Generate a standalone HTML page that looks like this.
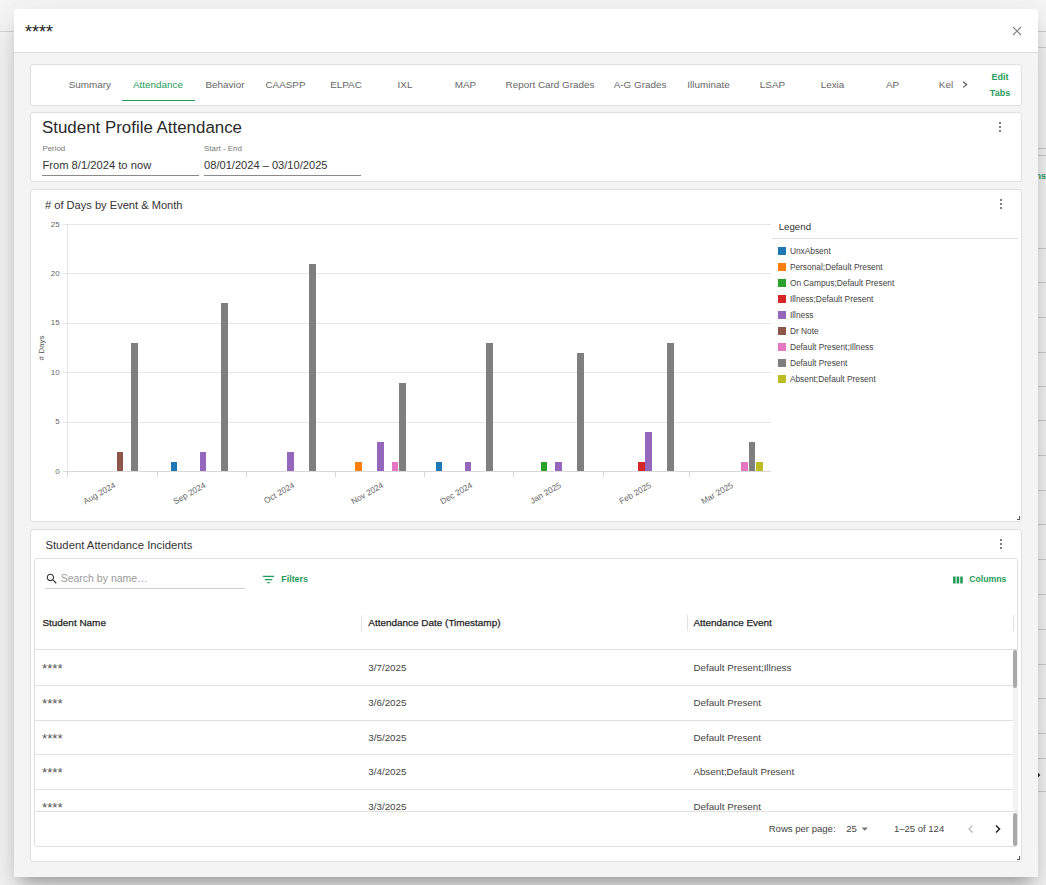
<!DOCTYPE html>
<html><head><meta charset="utf-8"><title>Student Profile</title>
<style>
html,body{margin:0;padding:0;}
body{width:1046px;height:885px;overflow:hidden;position:relative;font-family:"Liberation Sans",sans-serif;}
.t{position:absolute;line-height:1;white-space:nowrap;}
</style></head><body>
<div style="position:absolute;left:0.00px;top:0.00px;width:1046.00px;height:885.00px;background:#f6f6f6"></div>
<div style="position:absolute;left:0.00px;top:31.00px;width:14.00px;height:1.00px;background:#d6d6d6"></div>
<div style="position:absolute;left:1038.00px;top:31.00px;width:8.00px;height:1.00px;background:#d0d0d0"></div>
<div style="position:absolute;left:1038.00px;top:47.00px;width:8.00px;height:1.00px;background:#d0d0d0"></div>
<div style="position:absolute;left:1038.00px;top:148.00px;width:8.00px;height:1.00px;background:#cfcfcf"></div>
<div style="position:absolute;left:1038.00px;top:155.00px;width:8.00px;height:1.00px;background:#cfcfcf"></div>
<div style="position:absolute;left:1038.00px;top:248.00px;width:8.00px;height:1.00px;background:#cfcfcf"></div>
<div style="position:absolute;left:1038.00px;top:282.00px;width:8.00px;height:1.00px;background:#cfcfcf"></div>
<div style="position:absolute;left:1038.00px;top:317.00px;width:8.00px;height:1.00px;background:#cfcfcf"></div>
<div style="position:absolute;left:1038.00px;top:352.00px;width:8.00px;height:1.00px;background:#cfcfcf"></div>
<div style="position:absolute;left:1038.00px;top:386.00px;width:8.00px;height:1.00px;background:#cfcfcf"></div>
<div style="position:absolute;left:1038.00px;top:420.00px;width:8.00px;height:1.00px;background:#cfcfcf"></div>
<div style="position:absolute;left:1038.00px;top:455.00px;width:8.00px;height:1.00px;background:#cfcfcf"></div>
<div style="position:absolute;left:1038.00px;top:490.00px;width:8.00px;height:1.00px;background:#cfcfcf"></div>
<div style="position:absolute;left:1038.00px;top:524.00px;width:8.00px;height:1.00px;background:#cfcfcf"></div>
<div style="position:absolute;left:1038.00px;top:559.00px;width:8.00px;height:1.00px;background:#cfcfcf"></div>
<div style="position:absolute;left:1038.00px;top:594.00px;width:8.00px;height:1.00px;background:#cfcfcf"></div>
<div style="position:absolute;left:1038.00px;top:629.00px;width:8.00px;height:1.00px;background:#cfcfcf"></div>
<div style="position:absolute;left:1038.00px;top:664.00px;width:8.00px;height:1.00px;background:#cfcfcf"></div>
<div style="position:absolute;left:1038.00px;top:698.00px;width:8.00px;height:1.00px;background:#cfcfcf"></div>
<div style="position:absolute;left:1038.00px;top:733.00px;width:8.00px;height:1.00px;background:#cfcfcf"></div>
<div style="position:absolute;left:1038.00px;top:758.00px;width:8.00px;height:1.00px;background:#cfcfcf"></div>
<div style="position:absolute;left:1038.00px;top:791.00px;width:8.00px;height:1.00px;background:#cfcfcf"></div>
<div class="t" style="left:1035.50px;top:172.38px;font-size:9px;color:#259b5a;font-weight:700;">ns</div>
<svg style="position:absolute;left:1037px;top:771.5px" width="4" height="6" viewBox="0 0 4 6"><path d="M1 0.8L3.4 3L1 5.2z" fill="#222"/></svg>
<div id="modal" style="position:absolute;left:14px;top:9px;width:1024px;height:868px;background:#f4f4f4;border-radius:4px 4px 0 0;box-shadow:0 11px 15px -7px rgba(0,0,0,.3),0 24px 38px 3px rgba(0,0,0,.09),0 9px 46px 8px rgba(0,0,0,.05);"></div>
<div style="position:absolute;left:14.00px;top:9.00px;width:1024.00px;height:43.00px;background:#fff;border-radius:4px 4px 0 0;border-bottom:1px solid #dcdcdc"></div>
<div class="t" style="left:25.00px;top:23.26px;font-size:18px;color:#222;">****</div>
<svg style="position:absolute;left:1011px;top:24.8px" width="12" height="12" viewBox="0 0 12 12"><path d="M2 2L10 10M10 2L2 10" stroke="#858585" stroke-width="1.2"/></svg>
<div style="position:absolute;left:30.00px;top:64.00px;width:992.00px;height:42.00px;background:#fff;border:1px solid #e0e0e0;border-radius:3px;box-sizing:border-box;"></div>
<div class="t" style="left:-110.20px;width:400px;text-align:center;top:79.82px;font-size:9.9px;color:#666;">Summary</div>
<div class="t" style="left:-42.10px;width:400px;text-align:center;top:79.82px;font-size:9.9px;color:#259b5a;">Attendance</div>
<div class="t" style="left:25.00px;width:400px;text-align:center;top:79.82px;font-size:9.9px;color:#666;">Behavior</div>
<div class="t" style="left:85.50px;width:400px;text-align:center;top:79.82px;font-size:9.9px;color:#666;">CAASPP</div>
<div class="t" style="left:146.00px;width:400px;text-align:center;top:79.82px;font-size:9.9px;color:#666;">ELPAC</div>
<div class="t" style="left:205.00px;width:400px;text-align:center;top:79.82px;font-size:9.9px;color:#666;">IXL</div>
<div class="t" style="left:265.50px;width:400px;text-align:center;top:79.82px;font-size:9.9px;color:#666;">MAP</div>
<div class="t" style="left:350.00px;width:400px;text-align:center;top:79.82px;font-size:9.9px;color:#666;">Report Card Grades</div>
<div class="t" style="left:440.00px;width:400px;text-align:center;top:79.82px;font-size:9.9px;color:#666;">A-G Grades</div>
<div class="t" style="left:508.50px;width:400px;text-align:center;top:79.82px;font-size:9.9px;color:#666;">Illuminate</div>
<div class="t" style="left:572.50px;width:400px;text-align:center;top:79.82px;font-size:9.9px;color:#666;">LSAP</div>
<div class="t" style="left:632.50px;width:400px;text-align:center;top:79.82px;font-size:9.9px;color:#666;">Lexia</div>
<div class="t" style="left:692.50px;width:400px;text-align:center;top:79.82px;font-size:9.9px;color:#666;">AP</div>
<div class="t" style="left:746.00px;width:400px;text-align:center;top:79.82px;font-size:9.9px;color:#666;">Kel</div>
<div style="position:absolute;left:122.00px;top:99.50px;width:73.00px;height:1.70px;background:#259b5a"></div>
<svg style="position:absolute;left:961px;top:80px" width="8" height="9" viewBox="0 0 8 9"><path d="M2.2 1.8L5.6 4.6L2.2 7.4" fill="none" stroke="#555" stroke-width="1.2"/></svg>
<div class="t" style="left:800.00px;width:400px;text-align:center;top:73.28px;font-size:9.0px;color:#259b5a;font-weight:700;">Edit</div>
<div class="t" style="left:800.00px;width:400px;text-align:center;top:89.18px;font-size:9.0px;color:#259b5a;font-weight:700;">Tabs</div>
<div style="position:absolute;left:30.00px;top:112.00px;width:992.00px;height:70.00px;background:#fff;border:1px solid #e0e0e0;border-radius:3px;box-sizing:border-box;"></div>
<div class="t" style="left:42.00px;top:120.39px;font-size:16.9px;color:#2a2a2a;">Student Profile Attendance</div>
<div class="t" style="left:42.40px;top:144.51px;font-size:7.9px;color:#777;">Period</div>
<div class="t" style="left:204.10px;top:144.51px;font-size:7.9px;color:#777;">Start - End</div>
<div class="t" style="left:42.40px;top:159.52px;font-size:11.2px;color:#333;">From 8/1/2024 to now</div>
<div class="t" style="left:204.10px;top:159.60px;font-size:11.1px;color:#333;">08/01/2024 – 03/10/2025</div>
<div style="position:absolute;left:42.00px;top:175.00px;width:157.00px;height:1.00px;background:#8a8a8a"></div>
<div style="position:absolute;left:204.00px;top:175.00px;width:157.00px;height:1.00px;background:#8a8a8a"></div>
<div style="position:absolute;left:998.90px;top:121.80px;width:2.20px;height:2.20px;background:#555;border-radius:50%"></div>
<div style="position:absolute;left:998.90px;top:125.80px;width:2.20px;height:2.20px;background:#555;border-radius:50%"></div>
<div style="position:absolute;left:998.90px;top:129.80px;width:2.20px;height:2.20px;background:#555;border-radius:50%"></div>
<div style="position:absolute;left:30.00px;top:189.00px;width:992.00px;height:333.00px;background:#fff;border:1px solid #e0e0e0;border-radius:3px;box-sizing:border-box;"></div>
<div class="t" style="left:45.00px;top:199.90px;font-size:11.1px;color:#333;"># of Days by Event & Month</div>
<div style="position:absolute;left:999.80px;top:198.90px;width:2.20px;height:2.20px;background:#555;border-radius:50%"></div>
<div style="position:absolute;left:999.80px;top:202.90px;width:2.20px;height:2.20px;background:#555;border-radius:50%"></div>
<div style="position:absolute;left:999.80px;top:206.90px;width:2.20px;height:2.20px;background:#555;border-radius:50%"></div>
<div style="position:absolute;left:62.50px;top:471.00px;width:708.50px;height:1.00px;background:#d9d9d9"></div>
<div class="t" style="right:986.40px;top:467.71px;font-size:7.9px;color:#666;">0</div>
<div style="position:absolute;left:62.50px;top:421.56px;width:708.50px;height:1.00px;background:#e6e6e6"></div>
<div class="t" style="right:986.40px;top:418.27px;font-size:7.9px;color:#666;">5</div>
<div style="position:absolute;left:62.50px;top:372.12px;width:708.50px;height:1.00px;background:#e6e6e6"></div>
<div class="t" style="right:986.40px;top:368.83px;font-size:7.9px;color:#666;">10</div>
<div style="position:absolute;left:62.50px;top:322.68px;width:708.50px;height:1.00px;background:#e6e6e6"></div>
<div class="t" style="right:986.40px;top:319.39px;font-size:7.9px;color:#666;">15</div>
<div style="position:absolute;left:62.50px;top:273.24px;width:708.50px;height:1.00px;background:#e6e6e6"></div>
<div class="t" style="right:986.40px;top:269.95px;font-size:7.9px;color:#666;">20</div>
<div style="position:absolute;left:62.50px;top:223.80px;width:708.50px;height:1.00px;background:#e6e6e6"></div>
<div class="t" style="right:986.40px;top:220.51px;font-size:7.9px;color:#666;">25</div>
<div style="position:absolute;left:67.00px;top:224.00px;width:1.00px;height:247.50px;background:#e6e6e6"></div>
<div style="position:absolute;left:67.00px;top:471.50px;width:1.00px;height:5.50px;background:#d9d9d9"></div>
<div style="position:absolute;left:157.00px;top:471.50px;width:1.00px;height:5.50px;background:#d9d9d9"></div>
<div style="position:absolute;left:246.00px;top:471.50px;width:1.00px;height:5.50px;background:#d9d9d9"></div>
<div style="position:absolute;left:334.90px;top:471.50px;width:1.00px;height:5.50px;background:#d9d9d9"></div>
<div style="position:absolute;left:423.80px;top:471.50px;width:1.00px;height:5.50px;background:#d9d9d9"></div>
<div style="position:absolute;left:513.00px;top:471.50px;width:1.00px;height:5.50px;background:#d9d9d9"></div>
<div style="position:absolute;left:602.90px;top:471.50px;width:1.00px;height:5.50px;background:#d9d9d9"></div>
<div style="position:absolute;left:688.90px;top:471.50px;width:1.00px;height:5.50px;background:#d9d9d9"></div>
<div class="t" style="right:930.50px;top:479.50px;font-size:8.3px;color:#666;transform-origin:100% 70%;transform:rotate(-30deg)">Aug 2024</div>
<div class="t" style="right:840.50px;top:479.50px;font-size:8.3px;color:#666;transform-origin:100% 70%;transform:rotate(-30deg)">Sep 2024</div>
<div class="t" style="right:751.50px;top:479.50px;font-size:8.3px;color:#666;transform-origin:100% 70%;transform:rotate(-30deg)">Oct 2024</div>
<div class="t" style="right:662.60px;top:479.50px;font-size:8.3px;color:#666;transform-origin:100% 70%;transform:rotate(-30deg)">Nov 2024</div>
<div class="t" style="right:573.70px;top:479.50px;font-size:8.3px;color:#666;transform-origin:100% 70%;transform:rotate(-30deg)">Dec 2024</div>
<div class="t" style="right:484.50px;top:479.50px;font-size:8.3px;color:#666;transform-origin:100% 70%;transform:rotate(-30deg)">Jan 2025</div>
<div class="t" style="right:394.60px;top:479.50px;font-size:8.3px;color:#666;transform-origin:100% 70%;transform:rotate(-30deg)">Feb 2025</div>
<div class="t" style="right:312.60px;top:479.50px;font-size:8.3px;color:#666;transform-origin:100% 70%;transform:rotate(-30deg)">Mar 2025</div>
<div class="t" style="left:21.8px;top:344.3px;width:40px;text-align:center;font-size:8px;color:#555;transform:rotate(-90deg)"># Days</div>
<div style="position:absolute;left:116.60px;top:451.72px;width:6.60px;height:19.78px;background:#8c564b"></div>
<div style="position:absolute;left:131.00px;top:342.96px;width:6.60px;height:128.54px;background:#7f7f7f"></div>
<div style="position:absolute;left:170.60px;top:461.61px;width:6.60px;height:9.89px;background:#1f77b4"></div>
<div style="position:absolute;left:199.70px;top:451.72px;width:6.60px;height:19.78px;background:#9467bd"></div>
<div style="position:absolute;left:221.20px;top:303.40px;width:6.60px;height:168.10px;background:#7f7f7f"></div>
<div style="position:absolute;left:287.00px;top:451.72px;width:6.60px;height:19.78px;background:#9467bd"></div>
<div style="position:absolute;left:309.00px;top:263.85px;width:6.60px;height:207.65px;background:#7f7f7f"></div>
<div style="position:absolute;left:355.40px;top:461.61px;width:6.60px;height:9.89px;background:#ff7f0e"></div>
<div style="position:absolute;left:377.20px;top:441.84px;width:6.60px;height:29.66px;background:#9467bd"></div>
<div style="position:absolute;left:391.60px;top:461.61px;width:6.60px;height:9.89px;background:#e377c2"></div>
<div style="position:absolute;left:399.20px;top:382.51px;width:6.60px;height:88.99px;background:#7f7f7f"></div>
<div style="position:absolute;left:435.70px;top:461.61px;width:6.60px;height:9.89px;background:#1f77b4"></div>
<div style="position:absolute;left:464.80px;top:461.61px;width:6.60px;height:9.89px;background:#9467bd"></div>
<div style="position:absolute;left:486.40px;top:342.96px;width:6.60px;height:128.54px;background:#7f7f7f"></div>
<div style="position:absolute;left:540.60px;top:461.61px;width:6.60px;height:9.89px;background:#2ca02c"></div>
<div style="position:absolute;left:555.10px;top:461.61px;width:6.60px;height:9.89px;background:#9467bd"></div>
<div style="position:absolute;left:577.20px;top:352.84px;width:6.60px;height:118.66px;background:#7f7f7f"></div>
<div style="position:absolute;left:638.20px;top:461.61px;width:6.60px;height:9.89px;background:#d62728"></div>
<div style="position:absolute;left:645.40px;top:431.95px;width:6.60px;height:39.55px;background:#9467bd"></div>
<div style="position:absolute;left:667.00px;top:342.96px;width:6.60px;height:128.54px;background:#7f7f7f"></div>
<div style="position:absolute;left:741.40px;top:461.61px;width:6.60px;height:9.89px;background:#e377c2"></div>
<div style="position:absolute;left:748.80px;top:441.84px;width:6.60px;height:29.66px;background:#7f7f7f"></div>
<div style="position:absolute;left:756.00px;top:461.61px;width:6.60px;height:9.89px;background:#bcbd22"></div>
<div class="t" style="left:778.70px;top:222.19px;font-size:9.7px;color:#333;">Legend</div>
<div style="position:absolute;left:772.00px;top:238.00px;width:246.00px;height:1.00px;background:#e0e0e0"></div>
<div style="position:absolute;left:778.00px;top:246.50px;width:8.00px;height:8.00px;background:#1f77b4"></div>
<div class="t" style="left:789.90px;top:246.93px;font-size:8.35px;color:#444;">UnxAbsent</div>
<div style="position:absolute;left:778.00px;top:262.50px;width:8.00px;height:8.00px;background:#ff7f0e"></div>
<div class="t" style="left:789.90px;top:262.93px;font-size:8.35px;color:#444;">Personal;Default Present</div>
<div style="position:absolute;left:778.00px;top:278.50px;width:8.00px;height:8.00px;background:#2ca02c"></div>
<div class="t" style="left:789.90px;top:278.93px;font-size:8.35px;color:#444;">On Campus;Default Present</div>
<div style="position:absolute;left:778.00px;top:294.50px;width:8.00px;height:8.00px;background:#d62728"></div>
<div class="t" style="left:789.90px;top:294.93px;font-size:8.35px;color:#444;">Illness;Default Present</div>
<div style="position:absolute;left:778.00px;top:310.50px;width:8.00px;height:8.00px;background:#9467bd"></div>
<div class="t" style="left:789.90px;top:310.93px;font-size:8.35px;color:#444;">Illness</div>
<div style="position:absolute;left:778.00px;top:326.50px;width:8.00px;height:8.00px;background:#8c564b"></div>
<div class="t" style="left:789.90px;top:326.93px;font-size:8.35px;color:#444;">Dr Note</div>
<div style="position:absolute;left:778.00px;top:342.50px;width:8.00px;height:8.00px;background:#e377c2"></div>
<div class="t" style="left:789.90px;top:342.93px;font-size:8.35px;color:#444;">Default Present;Illness</div>
<div style="position:absolute;left:778.00px;top:358.50px;width:8.00px;height:8.00px;background:#7f7f7f"></div>
<div class="t" style="left:789.90px;top:358.93px;font-size:8.35px;color:#444;">Default Present</div>
<div style="position:absolute;left:778.00px;top:374.50px;width:8.00px;height:8.00px;background:#bcbd22"></div>
<div class="t" style="left:789.90px;top:374.93px;font-size:8.35px;color:#444;">Absent;Default Present</div>
<div style="position:absolute;left:1016.50px;top:518.50px;width:3.50px;height:1.00px;background:#555"></div>
<div style="position:absolute;left:1019.00px;top:516.00px;width:1.00px;height:3.50px;background:#555"></div>
<div style="position:absolute;left:30.00px;top:529.00px;width:992.00px;height:333.00px;background:#fff;border:1px solid #e0e0e0;border-radius:3px;box-sizing:border-box;"></div>
<div class="t" style="left:45.40px;top:540.03px;font-size:11.3px;color:#333;">Student Attendance Incidents</div>
<div style="position:absolute;left:999.80px;top:538.70px;width:2.20px;height:2.20px;background:#555;border-radius:50%"></div>
<div style="position:absolute;left:999.80px;top:542.70px;width:2.20px;height:2.20px;background:#555;border-radius:50%"></div>
<div style="position:absolute;left:999.80px;top:546.70px;width:2.20px;height:2.20px;background:#555;border-radius:50%"></div>
<div style="position:absolute;left:34.00px;top:558.00px;width:984.00px;height:289.00px;background:#fff;border:1px solid #e0e0e0;border-radius:3px;box-sizing:border-box;"></div>
<svg style="position:absolute;left:44.6px;top:572.2px" width="13.7" height="13.7" viewBox="0 0 24 24"><path fill="#333" d="M15.5 14h-.79l-.28-.27C15.41 12.59 16 11.11 16 9.5 16 5.91 13.09 3 9.5 3S3 5.91 3 9.5 5.91 16 9.5 16c1.61 0 3.09-.59 4.23-1.57l.27.28v.79l5 4.99L20.49 19l-4.99-5zm-6 0C7.01 14 5 11.99 5 9.5S7.01 5 9.5 5 14 7.01 14 9.5 11.99 14 9.5 14z"/></svg>
<div class="t" style="left:60.70px;top:573.41px;font-size:10.5px;color:#9a9a9a;">Search by name…</div>
<div style="position:absolute;left:44.80px;top:588.00px;width:200.20px;height:1.00px;background:#cfcfcf"></div>
<svg style="position:absolute;left:260.5px;top:572.2px" width="15" height="15" viewBox="0 0 24 24"><path fill="#259b5a" d="M10 18h4v-2h-4v2zM3 6v2h18V6H3zm3 7h12v-2H6v2z"/></svg>
<div class="t" style="left:281.30px;top:574.97px;font-size:8.9px;color:#259b5a;font-weight:700;">Filters</div>
<svg style="position:absolute;left:952px;top:573px" width="12" height="14" viewBox="0 0 12 14"><path fill="#259b5a" d="M1 3.5h2.6v7H1zM4.6 3.5h2.6v7H4.6zM8.2 3.5h2.6v7H8.2z"/></svg>
<div class="t" style="left:969.20px;top:574.64px;font-size:8.7px;color:#259b5a;font-weight:700;">Columns</div>
<div class="t" style="left:42.40px;top:617.78px;font-size:9.95px;color:#1e1e1e;-webkit-text-stroke:0.25px #1e1e1e">Student Name</div>
<div class="t" style="left:368.30px;top:617.78px;font-size:9.95px;color:#1e1e1e;-webkit-text-stroke:0.25px #1e1e1e">Attendance Date (Timestamp)</div>
<div class="t" style="left:693.40px;top:617.78px;font-size:9.95px;color:#1e1e1e;-webkit-text-stroke:0.25px #1e1e1e">Attendance Event</div>
<div style="position:absolute;left:360.50px;top:615.00px;width:1.00px;height:16.00px;background:#e3e3e3"></div>
<div style="position:absolute;left:686.50px;top:615.00px;width:1.00px;height:16.00px;background:#e3e3e3"></div>
<div style="position:absolute;left:1012.50px;top:615.00px;width:1.00px;height:16.00px;background:#e3e3e3"></div>
<div style="position:absolute;left:35.00px;top:649.00px;width:982.00px;height:1.00px;background:#e0e0e0"></div>
<div class="t" style="left:42.00px;top:662.34px;font-size:13.3px;color:#555;">****</div>
<div class="t" style="left:368.30px;top:662.80px;font-size:9.8px;color:#444;">3/7/2025</div>
<div class="t" style="left:693.40px;top:662.80px;font-size:9.8px;color:#444;">Default Present;Illness</div>
<div class="t" style="left:42.00px;top:697.14px;font-size:13.3px;color:#555;">****</div>
<div class="t" style="left:368.30px;top:697.90px;font-size:9.8px;color:#444;">3/6/2025</div>
<div class="t" style="left:693.40px;top:697.90px;font-size:9.8px;color:#444;">Default Present</div>
<div class="t" style="left:42.00px;top:732.34px;font-size:13.3px;color:#555;">****</div>
<div class="t" style="left:368.30px;top:732.70px;font-size:9.8px;color:#444;">3/5/2025</div>
<div class="t" style="left:693.40px;top:732.70px;font-size:9.8px;color:#444;">Default Present</div>
<div class="t" style="left:42.00px;top:766.34px;font-size:13.3px;color:#555;">****</div>
<div class="t" style="left:368.30px;top:766.80px;font-size:9.8px;color:#444;">3/4/2025</div>
<div class="t" style="left:693.40px;top:766.80px;font-size:9.8px;color:#444;">Absent;Default Present</div>
<div class="t" style="left:42.00px;top:801.14px;font-size:13.3px;color:#555;">****</div>
<div class="t" style="left:368.30px;top:801.60px;font-size:9.8px;color:#444;">3/3/2025</div>
<div class="t" style="left:693.40px;top:801.60px;font-size:9.8px;color:#444;">Default Present</div>
<div style="position:absolute;left:35.00px;top:685.00px;width:978.00px;height:1.00px;background:#e0e0e0"></div>
<div style="position:absolute;left:35.00px;top:720.00px;width:978.00px;height:1.00px;background:#e0e0e0"></div>
<div style="position:absolute;left:35.00px;top:754.00px;width:978.00px;height:1.00px;background:#e0e0e0"></div>
<div style="position:absolute;left:35.00px;top:789.00px;width:978.00px;height:1.00px;background:#e0e0e0"></div>
<div style="position:absolute;left:35.00px;top:811.00px;width:982.00px;height:1.00px;background:#e0e0e0"></div>
<div style="position:absolute;left:1013.00px;top:650.00px;width:4.50px;height:161.00px;background:#f3f3f3"></div>
<div style="position:absolute;left:1013.00px;top:650.00px;width:4.00px;height:38.00px;background:#a9a9a9;border-radius:2px"></div>
<div style="position:absolute;left:1013.00px;top:812.50px;width:4.00px;height:33.00px;background:#a9a9a9;border-radius:2px"></div>
<div class="t" style="left:768.70px;top:824.12px;font-size:9.55px;color:#444;">Rows per page:</div>
<div class="t" style="left:846.30px;top:824.12px;font-size:9.55px;color:#444;">25</div>
<svg style="position:absolute;left:860px;top:826px" width="10" height="6" viewBox="0 0 10 6"><path d="M1.5 1.5h6.5L4.75 4.8z" fill="#777"/></svg>
<div class="t" style="left:894.00px;top:824.16px;font-size:9.5px;color:#444;">1–25 of 124</div>
<svg style="position:absolute;left:966px;top:824px" width="10" height="10" viewBox="0 0 10 10"><path d="M6.5 1.5L3 5l3.5 3.5" fill="none" stroke="#bbb" stroke-width="1.3"/></svg>
<svg style="position:absolute;left:993px;top:824px" width="10" height="10" viewBox="0 0 10 10"><path d="M3 1.5L6.5 5 3 8.5" fill="none" stroke="#222" stroke-width="1.5"/></svg>
<div style="position:absolute;left:1016.50px;top:858.50px;width:3.50px;height:1.00px;background:#555"></div>
<div style="position:absolute;left:1019.00px;top:856.00px;width:1.00px;height:3.50px;background:#555"></div>
</body></html>
